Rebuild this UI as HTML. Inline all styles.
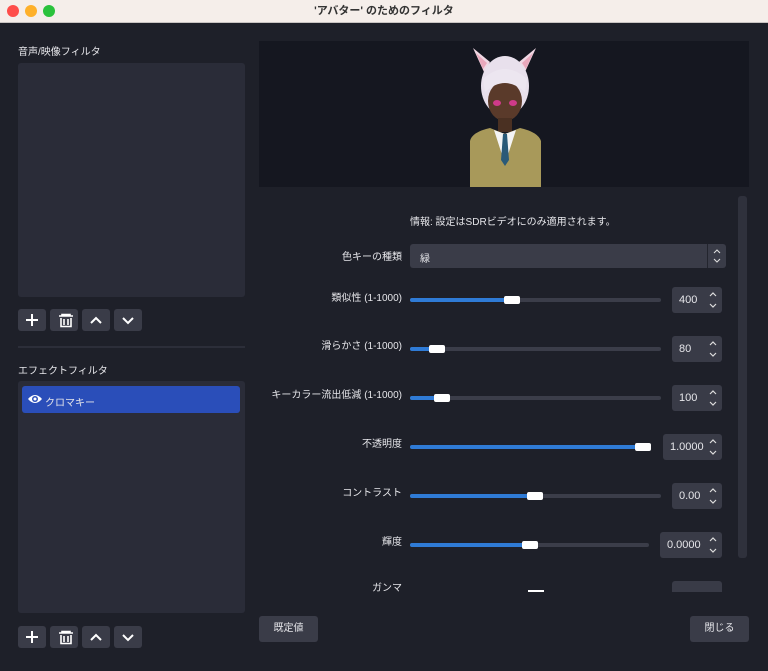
<!DOCTYPE html>
<html><head><meta charset="utf-8"><style>
*{margin:0;padding:0;box-sizing:border-box}
body{width:768px;height:671px;background:#1e2029;font-family:"Liberation Sans","Noto Sans CJK JP",sans-serif;color:#e6e6ea;font-size:10px;position:relative;overflow:hidden}
.a{position:absolute}
.title{left:0;top:0;width:768px;height:23px;background:#f5eeea;border-bottom:1px solid #c9c4c2;text-align:center;line-height:22px;font-size:11px;font-weight:bold;color:#333}
.dot{width:12px;height:12px;border-radius:50%;top:5px}
.panel{background:#2a2c38;border-radius:3px}
.lbl{text-align:right;width:150px;left:252px}
.track{height:4px;background:#3b3d49;border-radius:2px}
.fill{height:4px;background:#2f7bd6;border-radius:2px}
.knob{width:16px;height:8px;background:#fff;border-radius:2px}
.spin{background:#393b47;border-radius:3px;height:26px;font-size:11px;line-height:26px;padding-left:7px}
.arr{position:absolute;right:3px;top:4px}
.pb{background:#3a3c48;border-radius:3px;height:26px;width:59px;text-align:center;line-height:26px;font-size:10px}
</style></head><body>
<div class="a title">'アバター' のためのフィルタ</div>
<div class="a dot" style="left:7px;background:#fe4d4a"></div>
<div class="a dot" style="left:25px;background:#feb02a"></div>
<div class="a dot" style="left:43px;background:#2ac23c"></div>

<div class="a" style="left:18px;top:43px">音声/映像フィルタ</div>
<div class="a panel" style="left:18px;top:63px;width:227px;height:234px"></div>
<svg class="a" style="left:18px;top:309px" width="124" height="22">
<rect x="0" width="28" height="22" rx="3" fill="#3a3c48"/><rect x="32" width="28" height="22" rx="3" fill="#3a3c48"/><rect x="64" width="28" height="22" rx="3" fill="#3a3c48"/><rect x="96" width="28" height="22" rx="3" fill="#3a3c48"/>
<path d="M14 5v12M8 11h12" stroke="#fff" stroke-width="2"/>
<path d="M41 7h14M44 7v-1.5h8V7M43 9v8.5h10V9M46 10v6M50 10v6" stroke="#fff" stroke-width="1.6" fill="none"/>
<path d="M73 14l5-5 5 5" stroke="#fff" stroke-width="2" fill="none"/>
<path d="M105 9l5 5 5-5" stroke="#fff" stroke-width="2" fill="none"/>
</svg>
<div class="a" style="left:18px;top:346px;width:227px;height:2px;background:#2c2e39"></div>
<div class="a" style="left:18px;top:362px">エフェクトフィルタ</div>
<div class="a panel" style="left:18px;top:381px;width:227px;height:232px"></div>
<div class="a" style="left:22px;top:386px;width:218px;height:27px;background:#2a4eb9;border-radius:3px"></div>
<svg class="a" style="left:27px;top:393px" width="16" height="12"><path d="M1 6Q8 -2 15 6Q8 14 1 6Z" fill="#fff"/><circle cx="8" cy="6" r="3" fill="#2a4eb9"/><circle cx="8" cy="6" r="1.5" fill="#fff"/></svg>
<div class="a" style="left:45px;top:394px">クロマキー</div>
<svg class="a" style="left:18px;top:626px" width="124" height="22">
<rect x="0" width="28" height="22" rx="3" fill="#3a3c48"/><rect x="32" width="28" height="22" rx="3" fill="#3a3c48"/><rect x="64" width="28" height="22" rx="3" fill="#3a3c48"/><rect x="96" width="28" height="22" rx="3" fill="#3a3c48"/>
<path d="M14 5v12M8 11h12" stroke="#fff" stroke-width="2"/>
<path d="M41 7h14M44 7v-1.5h8V7M43 9v8.5h10V9M46 10v6M50 10v6" stroke="#fff" stroke-width="1.6" fill="none"/>
<path d="M73 14l5-5 5 5" stroke="#fff" stroke-width="2" fill="none"/>
<path d="M105 9l5 5 5-5" stroke="#fff" stroke-width="2" fill="none"/>
</svg>

<div class="a" style="left:259px;top:41px;width:490px;height:146px;background:#151720"></div>
<svg class="a" style="left:470px;top:44px" width="72" height="143">
<path d="M3 4L20 18 14 28Z" fill="#f0d8e4"/><path d="M66 4L49 18 55 28Z" fill="#f0d8e4"/>
<path d="M6 9L17 19 13 25Z" fill="#e9a8bc"/><path d="M63 9L52 19 56 25Z" fill="#e9a8bc"/>
<ellipse cx="35" cy="42" rx="24" ry="30" fill="#e8e0ec"/>
<ellipse cx="35" cy="57" rx="17" ry="20" fill="#5a3a2a"/>
<path d="M13 35Q35 15 57 35L55 48Q35 30 15 48Z" fill="#ece6f0"/>
<ellipse cx="27" cy="59" rx="4" ry="3" fill="#d03a8a"/><ellipse cx="43" cy="59" rx="4" ry="3" fill="#d03a8a"/>
<rect x="28" y="74" width="14" height="14" fill="#4a3022"/>
<path d="M0 97Q2 88 20 84L35 90 50 84Q68 88 71 97V143H0Z" fill="#a8995a"/>
<path d="M24 86L35 120 46 86 35 90Z" fill="#f4f4f4"/>
<path d="M33 90h4l2 26-4 6-4-6Z" fill="#2a5a78"/>
</svg>

<div class="a" style="left:410px;top:213px;font-size:10px">情報: 設定はSDRビデオにのみ適用されます。</div>

<div class="a lbl" style="top:248px">色キーの種類</div>
<div class="a" style="left:410px;top:244px;width:316px;height:24px;background:#3a3c48;border-radius:3px"></div>
<div class="a" style="left:707px;top:244px;width:1px;height:24px;background:#23252e"></div>
<div class="a" style="left:420px;top:250px">緑</div>
<svg class="a" style="left:712px;top:248px" width="10" height="16"><path d="M2 5l3-3 3 3M2 11l3 3 3-3" stroke="#ddd" stroke-width="1.1" fill="none"/></svg>

<div class="a lbl" style="top:289px">類似性 (1-1000)</div>
<div class="a track" style="left:410px;top:298px;width:251px"></div><div class="a fill" style="left:410px;top:298px;width:100px"></div><div class="a knob" style="left:504px;top:296px"></div>
<div class="a spin" style="left:672px;top:287px;width:50px">400<svg class="arr" width="12" height="18"><path d="M3 5l3-3 3 3M3 13l3 3 3-3" stroke="#ddd" stroke-width="1.2" fill="none"/></svg></div>

<div class="a lbl" style="top:337px">滑らかさ (1-1000)</div>
<div class="a track" style="left:410px;top:347px;width:251px"></div><div class="a fill" style="left:410px;top:347px;width:22px"></div><div class="a knob" style="left:429px;top:345px"></div>
<div class="a spin" style="left:672px;top:336px;width:50px">80<svg class="arr" width="12" height="18"><path d="M3 5l3-3 3 3M3 13l3 3 3-3" stroke="#ddd" stroke-width="1.2" fill="none"/></svg></div>

<div class="a lbl" style="top:386px">キーカラー流出低減 (1-1000)</div>
<div class="a track" style="left:410px;top:396px;width:251px"></div><div class="a fill" style="left:410px;top:396px;width:27px"></div><div class="a knob" style="left:434px;top:394px"></div>
<div class="a spin" style="left:672px;top:385px;width:50px">100<svg class="arr" width="12" height="18"><path d="M3 5l3-3 3 3M3 13l3 3 3-3" stroke="#ddd" stroke-width="1.2" fill="none"/></svg></div>

<div class="a lbl" style="top:435px">不透明度</div>
<div class="a fill" style="left:410px;top:445px;width:240px"></div><div class="a knob" style="left:635px;top:443px"></div>
<div class="a spin" style="left:663px;top:434px;width:59px">1.0000<svg class="arr" width="12" height="18"><path d="M3 5l3-3 3 3M3 13l3 3 3-3" stroke="#ddd" stroke-width="1.2" fill="none"/></svg></div>

<div class="a lbl" style="top:484px">コントラスト</div>
<div class="a track" style="left:410px;top:494px;width:251px"></div><div class="a fill" style="left:410px;top:494px;width:125px"></div><div class="a knob" style="left:527px;top:492px"></div>
<div class="a spin" style="left:672px;top:483px;width:50px">0.00<svg class="arr" width="12" height="18"><path d="M3 5l3-3 3 3M3 13l3 3 3-3" stroke="#ddd" stroke-width="1.2" fill="none"/></svg></div>

<div class="a lbl" style="top:533px">輝度</div>
<div class="a track" style="left:410px;top:543px;width:239px"></div><div class="a fill" style="left:410px;top:543px;width:115px"></div><div class="a knob" style="left:522px;top:541px"></div>
<div class="a spin" style="left:660px;top:532px;width:62px">0.0000<svg class="arr" width="12" height="18"><path d="M3 5l3-3 3 3M3 13l3 3 3-3" stroke="#ddd" stroke-width="1.2" fill="none"/></svg></div>

<div class="a" style="left:252px;top:578px;width:500px;height:14px;overflow:hidden">
<div class="a" style="left:0;top:1px;width:150px;text-align:right">ガンマ</div>
<div class="a" style="left:276px;top:12px;width:16px;height:3px;background:#fff"></div>
<div class="a spin" style="left:420px;top:3px;width:50px"></div>
</div>

<div class="a" style="left:738px;top:196px;width:9px;height:362px;background:#2f313c;border-radius:3px"></div>

<div class="a pb" style="left:259px;top:616px">既定値</div>
<div class="a pb" style="left:690px;top:616px">閉じる</div>
</body></html>
